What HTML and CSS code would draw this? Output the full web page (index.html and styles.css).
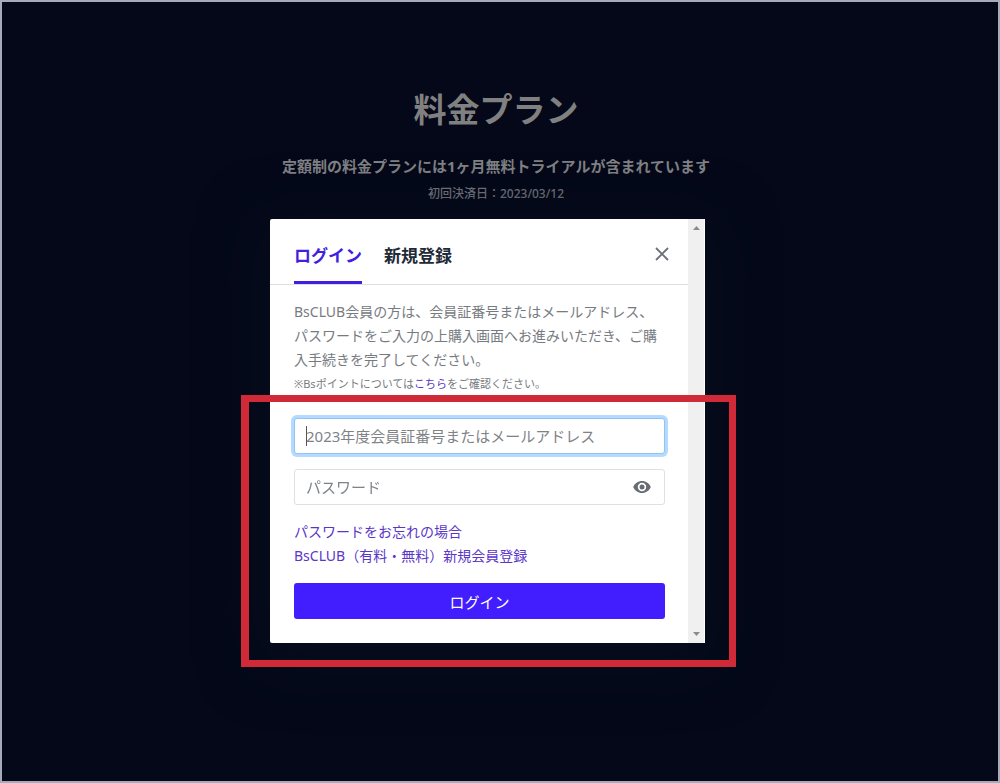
FILE: index.html
```
<!DOCTYPE html>
<html lang="ja">
<head>
    <meta charset="UTF-8">
    <meta name="viewport" content="width=device-width, initial-scale=1.0">
    <title>料金プラン</title>
    <link rel="stylesheet" href="styles.css">
</head>
<body>

<main class="page">
    <h1 class="page-title">料金プラン</h1>
    <p class="page-lead">定額制の料金プランには1ヶ月無料トライアルが含まれています</p>
    <p class="page-date">初回決済日：2023/03/12</p>

    <div class="dialog" role="dialog" aria-label="ログイン">
        <div class="dialog-main">
            <div class="dialog-header">
                <div class="tabs">
                    <button type="button" class="tab active">ログイン</button>
                    <button type="button" class="tab">新規登録</button>
                </div>
                <button type="button" class="close" aria-label="閉じる">
                    <svg width="14" height="14" viewBox="0 0 14 14"><path d="M1 1l12 12M13 1L1 13" stroke="currentColor" stroke-width="1.800" fill="none"/></svg>
                </button>
            </div>

            <div class="dialog-body">
                <p class="description">BsCLUB会員の方は、会員証番号またはメールアドレス、パスワードをご入力の上購入画面へお進みいただき、ご購入手続きを完了してください。</p>
                <p class="note">※Bsポイントについては<a href="#">こちら</a>をご確認ください。</p>

                <form class="login-form">
                    <input class="field" type="text" id="memberId" aria-label="2023年度会員証番号またはメールアドレス" placeholder="2023年度会員証番号またはメールアドレス" autofocus>
                    <span class="caret"></span>
                    <div class="password">
                        <input class="field" type="password" id="password" aria-label="パスワード" placeholder="パスワード">
                        <button type="button" class="show-password" aria-label="パスワードを表示">
                            <svg width="18" height="12" viewBox="0 0 18 12"><path fill="currentColor" fill-rule="evenodd" d="M9 0C5 0 1.700 2.500.2 6 1.700 9.500 5 12 9 12s7.300-2.500 8.800-6C16.300 2.500 13 0 9 0zm0 10.200a4.200 4.200 0 1 1 0-8.400 4.200 4.200 0 0 1 0 8.400z"/><circle cx="9" cy="6" r="2.500" fill="currentColor"/></svg>
                        </button>
                    </div>
                    <div class="links">
                        <a href="#">パスワードをお忘れの場合</a>
                        <a href="#">BsCLUB（有料・無料）新規会員登録</a>
                    </div>
                    <button type="submit" class="submit">ログイン</button>
                    <div class="highlight"></div>
                </form>
            </div>
        </div>

        <div class="scrollbar">
            <svg width="7" height="4" viewBox="0 0 7 4"><path d="M0 4l3.500-4L7 4z" fill="#8b8b8b"/></svg>
            <svg width="7" height="4" viewBox="0 0 7 4"><path d="M0 0l3.500 4L7 0z" fill="#8b8b8b"/></svg>
        </div>
    </div>
</main>

</body>
</html>
```
FILE: styles.css
```
* {
    box-sizing: border-box;
}
body {
    margin: 0;
    font-family: "Noto Sans", "Noto Sans CJK JP", sans-serif;
    font-size: 14px;
    line-height: 24px;
    color: #777b81;
}
h1, p {
    margin: 0;
}
button, input {
    font-family: inherit;
    margin: 0;
}
button {
    border: none;
    background: none;
    padding: 0;
    cursor: pointer;
}
svg {
    display: block;
}
a {
    color: #5a36c8;
    text-decoration: none;
}
.page {
    display: flex;
    flex-direction: column;
    align-items: center;
    min-height: 100vh;
    padding: 88px 8px 24px 0;
    border: 2px solid #a5abb8;
    background-color: #040818;
    overflow: hidden;
}
.page-title {
    font-size: 33px;
    line-height: 40px;
    color: #808080;
}
.page-lead {
    margin-top: 24px;
    font-size: 15px;
    font-weight: bold;
    color: #808285;
}
.page-date {
    margin-top: 6px;
    font-size: 12px;
    line-height: 20px;
    font-weight: 500;
    color: #777a80;
}

/* dialog */
.dialog {
    display: flex;
    width: 100%;
    max-width: 435px;
    margin-top: 15px;
    margin-right: 17px;
    border-radius: 2px;
    background-color: #fff;
    box-shadow: 0 12px 60px 8px #080e1e;
}
.dialog-main {
    flex: 1;
    min-width: 0;
}
.dialog-header {
    display: flex;
    justify-content: space-between;
    align-items: flex-start;
    height: 66px;
    padding: 0 19px 0 24px;
    border-bottom: 1px solid #dcdee0;
}
.tabs {
    display: flex;
    gap: 22px;
}
.tab {
    height: 65px;
    padding-top: 9px;
    border-bottom: 3px solid transparent;
    font-size: 17px;
    font-weight: bold;
    color: #212936;
}
.tab.active {
    color: #421ee0;
    border-bottom-color: #421ee0;
}
.close {
    margin-top: 28px;
    color: #6b7078;
}
.dialog-body {
    padding: 15px 23px 24px 24px;
}
.note {
    font-size: 11px;
}

/* login form */
.login-form {
    position: relative;
    display: flex;
    flex-direction: column;
    margin-top: 22px;
}
.field {
    width: 100%;
    height: 36px;
    padding: 0 11px;
    border: 1px solid #dfe0e2;
    border-radius: 3px;
    background-color: #fff;
    font-size: 15px;
    color: #333;
    caret-color: transparent;
}
.field::placeholder {
    color: #7f8388;
    opacity: 1;
}
.field:focus {
    outline: none;
    border-color: #91c4f2;
    box-shadow: 0 0 0 3px #b4daff;
}
.caret {
    position: absolute;
    top: 8px;
    left: 12px;
    width: 1px;
    height: 20px;
    background-color: #555;
}
.password {
    position: relative;
    margin-top: 15px;
}
.show-password {
    position: absolute;
    top: 12px;
    right: 14px;
    color: #686c74;
}
.links {
    display: flex;
    flex-direction: column;
    align-items: flex-start;
    margin-top: 15px;
}
.submit {
    height: 36px;
    margin-top: 15px;
    border-radius: 3px;
    background-color: #421eff;
    font-size: 15px;
    color: #fff;
}
.highlight {
    position: absolute;
    top: -23px;
    right: -71px;
    bottom: -48px;
    left: -53px;
    border: 7px solid #d02937;
    border-left-width: 8px;
    pointer-events: none;
}

.scrollbar {
    display: flex;
    flex-direction: column;
    justify-content: space-between;
    align-items: center;
    width: 17px;
    padding: 7px 0;
    border-right: 1px solid #fff;
    background-color: #f0f0f0;
}
```
